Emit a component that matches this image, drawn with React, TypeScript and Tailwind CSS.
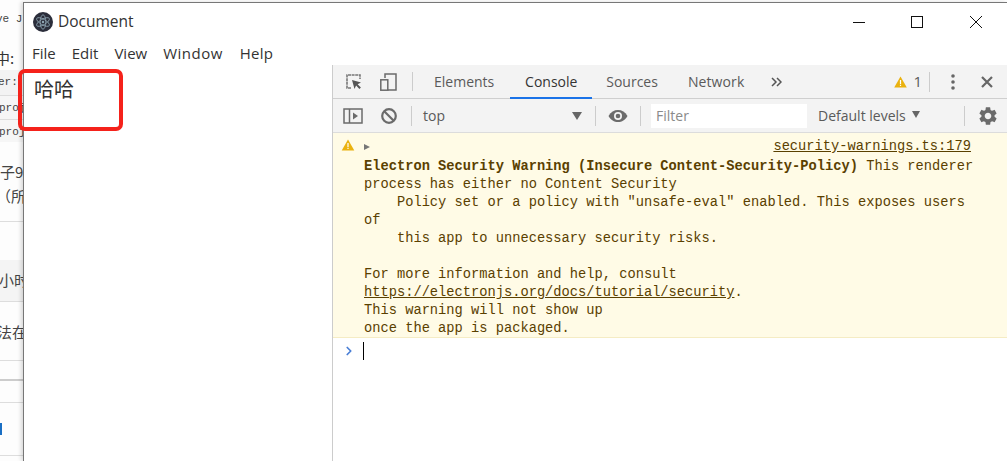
import { ChevronRight } from "lucide-react";

const sans = "font-['Open_Sans','Noto_Sans',sans-serif]";
const mono = "font-['Liberation_Mono',monospace] text-[11px]";

function StripRow({ h, text, cls = "" }: { h: number; text?: string; cls?: string }) {
  return (
    <div className={`flex items-center whitespace-nowrap overflow-hidden ${cls}`} style={{ height: h }}>
      {text}
    </div>
  );
}

function LeftStrip() {
  return (
    <div className="w-[23px] shrink-0 overflow-hidden bg-[#fdfdfd] text-[15px] text-[#444] font-['Noto_Sans_CJK_SC',sans-serif]">
      <StripRow h={14} />
      <StripRow h={10} text="ve J" cls={`${mono} -ml-[4px]`} />
      <StripRow h={22} />
      <StripRow h={24} text="中:" cls="-ml-[5px] text-[#333]" />
      <StripRow h={25} text="er:" cls={`${mono} bg-[#f3f3f3] -ml-[2px]`} />
      <StripRow h={24} text="proj" cls={`${mono} bg-[#f6f6f6] border-t border-[#ddd] -ml-[1px] pt-[2px]`} />
      <StripRow h={23} text="proj" cls={`${mono} bg-[#f6f6f6] border-t border-[#ddd] -ml-[1px] pt-[2px]`} />
      <StripRow h={18} />
      <StripRow h={24} text="子9." />
      <StripRow h={24} text="（所" cls="-ml-[4px]" />
      <StripRow h={14} cls="border-b border-[#ddd]" />
      <StripRow h={38} />
      <StripRow h={42} text="小时" cls="bg-[#f4f4f4] border-b border-[#ddd] -ml-[1px]" />
      <StripRow h={59} text="法在" cls="border-b border-[#ddd] -ml-[3px] pt-[3px]" />
      <StripRow h={20} cls="border-b-2 border-[#ccc]" />
      <StripRow h={22} cls="border-b border-[#ddd]" />
      <div className="flex h-[53px] items-center border-b border-[#ddd]">
        <span className="h-[12px] w-[2px] bg-[#1a6fc4]" />
      </div>
    </div>
  );
}

function ElectronLogo() {
  return (
    <svg width="20" height="20" viewBox="0 0 20 20" fill="none">
      <circle cx="10" cy="10" r="10" fill="#2b2e3b" />
      <g stroke="#8fa6b4" strokeWidth="0.8">
        <ellipse cx="10" cy="10" rx="7.2" ry="2.8" transform="rotate(30 10 10)" />
        <ellipse cx="10" cy="10" rx="7.2" ry="2.8" transform="rotate(90 10 10)" />
        <ellipse cx="10" cy="10" rx="7.2" ry="2.8" transform="rotate(150 10 10)" />
      </g>
      <circle cx="10" cy="10" r="1.2" fill="#8fa6b4" />
    </svg>
  );
}

function TitleBar() {
  return (
    <div className="flex h-[37px] shrink-0 items-center pl-[9px] text-[#333]">
      <ElectronLogo />
      <span className={`ml-[5px] text-[15.5px] ${sans}`}>Document</span>
      <div className="ml-auto flex items-center">
        <svg width="14" height="14" viewBox="0 0 14 14" className="mr-[44px]">
          <path d="M1 7.500h12" stroke="#111" strokeWidth="1" />
        </svg>
        <svg width="14" height="14" viewBox="0 0 14 14" className="mr-[45px]">
          <rect x="1.500" y="1.500" width="11" height="11" fill="none" stroke="#111" strokeWidth="1" />
        </svg>
        <svg width="14" height="14" viewBox="0 0 14 14" className="mr-[24px]">
          <path d="M1 1l12 12M13 1L1 13" stroke="#111" strokeWidth="1" />
        </svg>
      </div>
    </div>
  );
}

function MenuBar() {
  return (
    <div className={`flex h-[25px] shrink-0 items-center gap-[16px] pl-[8px] pt-[1px] text-[15px] text-[#333] ${sans}`}>
      <span>File</span>
      <span>Edit</span>
      <span>View</span>
      <span className="tracking-[0.5px]">Window</span>
      <span className="ml-[1px] tracking-[0.2px]">Help</span>
    </div>
  );
}

function TabsBar() {
  return (
    <div className={`flex h-[34px] shrink-0 items-stretch border-b border-[#cfcfcf] bg-[#f3f3f3] text-[14px] text-[#5a5a5a] ${sans}`}>
      <div className="flex items-center gap-[15px] pl-[12px] pr-[14px]">
        <svg width="18" height="18" viewBox="0 0 18 18" fill="none">
          <path d="M6 15H2V2h13v4" stroke="#777" strokeWidth="1.600" strokeDasharray="3 0.600" />
          <path d="M7 7l2.500 9 1.600-3.400 3.300 3.400 1.500-1.500-3.300-3.300 3.400-1.600z" fill="#555" />
        </svg>
        <svg width="20" height="20" viewBox="0 0 20 20" fill="none">
          <path d="M7 6V2h11v16h-8" stroke="#6b6b6b" strokeWidth="1.500" />
          <rect x="2.800" y="7.800" width="7" height="10.400" stroke="#6b6b6b" strokeWidth="1.500" />
        </svg>
      </div>
      <div className="my-[7px] w-px bg-[#ccc]" />
      <div className="ml-[21px] flex items-center">Elements</div>
      <div className="relative ml-[16px] flex w-[82px] items-center justify-center text-[#333]">
        Console
        <span className="absolute bottom-[-1px] left-0 h-[2px] w-full bg-[#1a73e8]" />
      </div>
      <div className="ml-[14px] flex items-center">Sources</div>
      <div className="ml-[30px] flex items-center tracking-[0.1px]">Network</div>
      <div className="ml-[27px] flex items-center">
        <svg width="11" height="10" viewBox="0 0 11 10" fill="none">
          <path d="M1 1l4 4-4 4M6 1l4 4-4 4" stroke="#555" strokeWidth="1.500" />
        </svg>
      </div>
      <div className="ml-auto flex items-center pr-[14px]">
        <svg width="13" height="12" viewBox="0 0 13 12">
          <path d="M6.500 0.500L12.800 11.500H0.200z" fill="#eab20f" />
          <path d="M5.900 4h1.200v4H5.900zM5.900 8.800h1.200V10H5.900z" fill="#fff" />
        </svg>
        <span className="ml-[6px] text-[15px]">1</span>
        <span className="ml-[7px] h-[20px] w-px bg-[#ccc]" />
        <svg width="4" height="16" viewBox="0 0 4 16" className="ml-[21px]">
          <circle cx="2" cy="2" r="1.800" fill="#666" />
          <circle cx="2" cy="8" r="1.800" fill="#666" />
          <circle cx="2" cy="14" r="1.800" fill="#666" />
        </svg>
        <svg width="12" height="12" viewBox="0 0 12 12" className="ml-[26px]">
          <path d="M1 1l10 10M11 1L1 11" stroke="#666" strokeWidth="2.200" />
        </svg>
      </div>
    </div>
  );
}

function ConsoleToolbar() {
  return (
    <div className={`flex h-[34px] shrink-0 items-center border-b border-[#dcdcdc] bg-[#f3f3f3] text-[14px] text-[#5a5a5a] ${sans}`}>
      <svg width="20" height="18" viewBox="0 0 20 18" fill="none" className="ml-[10px]">
        <rect x="1" y="2" width="18" height="14" stroke="#6b6b6b" strokeWidth="1.500" />
        <path d="M6.500 2v14" stroke="#6b6b6b" strokeWidth="1.500" />
        <path d="M10 5.500l5 3.500-5 3.500z" fill="#6b6b6b" />
      </svg>
      <svg width="18" height="18" viewBox="0 0 18 18" fill="none" className="ml-[17px]">
        <circle cx="9" cy="9" r="6.800" stroke="#6b6b6b" strokeWidth="2.200" />
        <path d="M4.500 4.500l9 9" stroke="#6b6b6b" strokeWidth="2.200" />
      </svg>
      <span className="ml-[13px] h-[20px] w-px bg-[#ccc]" />
      <span className="ml-[11px] w-[149px]">top</span>
      <span className="h-0 w-0 border-x-[5px] border-t-[8px] border-x-transparent border-t-[#666]" />
      <span className="ml-[13px] h-[20px] w-px bg-[#ccc]" />
      <svg width="20" height="14" viewBox="0 0 20 14" className="ml-[12px]">
        <path d="M0.500 7C3 2.800 6 1 10 1s7 1.800 9.500 6c-2.500 4.200-5.500 6-9.500 6S3 11.200 0.500 7z" fill="#6b6b6b" />
        <circle cx="10" cy="7" r="4" fill="#f3f3f3" />
        <circle cx="10" cy="7" r="2.300" fill="#6b6b6b" />
      </svg>
      <span className="ml-[12px] h-[20px] w-px bg-[#ccc]" />
      <div className="ml-[10px] flex h-[24px] w-[156px] items-center bg-white pl-[5px] text-[#8a8a8a]">Filter</div>
      <span className="ml-[11px]">Default levels</span>
      <span className="ml-[6px] mb-[3px] h-0 w-0 border-x-[4px] border-t-[7px] border-x-transparent border-t-[#666]" />
      <span className="ml-[44px] h-[20px] w-px bg-[#ccc]" />
      <svg width="22" height="22" viewBox="0 0 24 24" className="ml-[12px]">
        <path
          fill="#6b6b6b"
          d="M19.140 12.940c.04-.3.06-.61.06-.94 0-.32-.02-.64-.07-.94l2.030-1.580a.49.49 0 0 0 .12-.61l-1.920-3.320a.488.488 0 0 0-.59-.22l-2.390.96c-.5-.38-1.030-.7-1.620-.94l-.36-2.540a.484.484 0 0 0-.48-.41h-3.840c-.24 0-.43.17-.47.41l-.36 2.540c-.59.24-1.130.57-1.620.94l-2.390-.96c-.22-.08-.47 0-.59.22L2.740 8.870c-.12.21-.08.47.12.61l2.030 1.580c-.05.3-.09.63-.09.94s.02.64.07.94l-2.030 1.580a.49.49 0 0 0-.12.61l1.920 3.320c.12.22.37.29.59.22l2.390-.96c.5.38 1.030.7 1.620.94l.36 2.540c.05.24.24.41.48.41h3.840c.24 0 .44-.17.47-.41l.36-2.540c.59-.24 1.130-.56 1.620-.94l2.390.96c.22.08.47 0 .59-.22l1.920-3.320c.12-.22.07-.47-.12-.61l-2.010-1.580zM12 15.600c-1.980 0-3.600-1.620-3.600-3.600s1.620-3.600 3.600-3.600 3.600 1.620 3.600 3.600-1.620 3.600-3.600 3.600z"
        />
      </svg>
    </div>
  );
}

function WarningMessage() {
  return (
    <div className="relative h-[205px] shrink-0 border-b border-[#f5ecc4] bg-[#fffbe6] pl-[31px] pt-[5px] font-['Liberation_Mono',monospace] text-[13.72px] leading-[18px] text-[#5a4000]">
      <svg width="14" height="12" viewBox="0 0 13 12" className="absolute left-[8px] top-[6px]">
        <path d="M6.500 0.500L12.800 11.500H0.200z" fill="#eab20f" />
        <path d="M5.900 4h1.200v4H5.900zM5.900 8.800h1.200V10H5.900z" fill="#fff" />
      </svg>
      <div className="flex h-[20px] items-start justify-between pr-[36px]">
        <span className="mt-[6px] h-0 w-0 border-y-[3.500px] border-l-[6px] border-y-transparent border-l-[#777]" />
        <span className="underline">security-warnings.ts:179</span>
      </div>
      <div className="whitespace-pre">
        <span className="font-bold">Electron Security Warning (Insecure Content-Security-Policy)</span>
        {" This renderer\nprocess has either no Content Security\n    Policy set or a policy with \"unsafe-eval\" enabled. This exposes users\nof\n    this app to unnecessary security risks.\n\nFor more information and help, consult\n"}
        <span className="underline">https://electronjs.org/docs/tutorial/security</span>
        {".\nThis warning will not show up\nonce the app is packaged."}
      </div>
    </div>
  );
}

export default function App() {
  return (
    <div className="relative flex h-[461px] w-[1007px] overflow-hidden bg-white">
      <LeftStrip />
      <div className="mt-[2px] flex min-w-0 flex-1 flex-col border-l border-t border-[#777] bg-white shadow-[-2px_0_4px_rgba(0,0,0,0.15)]">
        <TitleBar />
        <MenuBar />
        <div className="flex min-h-0 flex-1">
          <div className="w-[308px] shrink-0 pl-[10px] pt-[9px] font-['Noto_Sans_CJK_SC',sans-serif] text-[20px] leading-[30px] text-[#333]">
            哈哈
          </div>
          <div className="flex min-w-0 flex-1 flex-col border-l border-[#ccc]">
            <TabsBar />
            <ConsoleToolbar />
            <WarningMessage />
            <div className="flex items-center pl-[9px] pt-[4px]">
              <ChevronRight size={14} strokeWidth={3} className="text-[#4a7fd6]" />
              <span className="ml-[7px] h-[18px] w-px bg-black" />
            </div>
          </div>
        </div>
      </div>
      <div className="absolute left-[18px] top-[69px] h-[62px] w-[105px] rounded-[7px] border-[4px] border-[#f5221b]" />
    </div>
  );
}
